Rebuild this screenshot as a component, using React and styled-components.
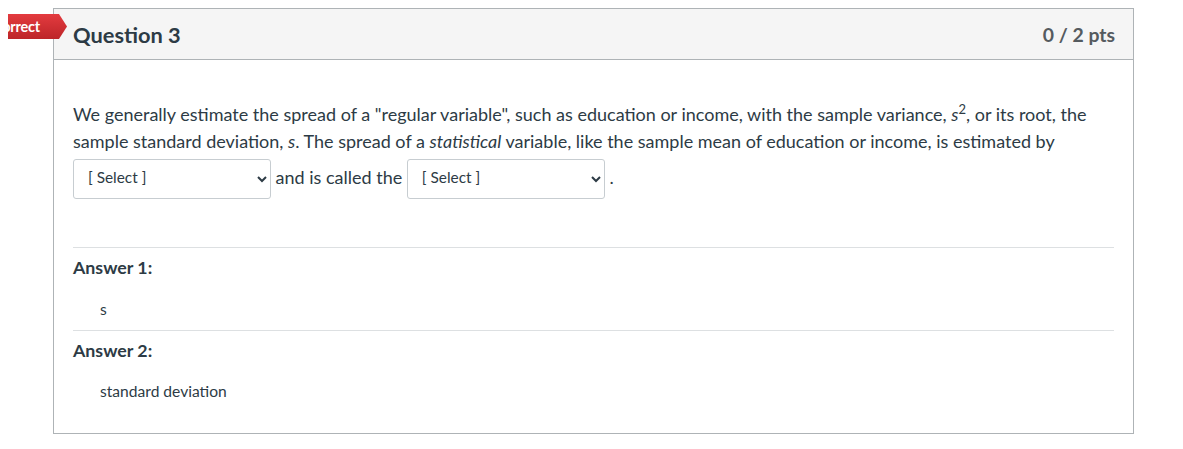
import React from 'react'
import styled, { createGlobalStyle } from 'styled-components'

const GlobalStyle = createGlobalStyle`
  body {
    margin: 8px;
    background: #fff;
    font-family: Lato, "Open Sans", "Liberation Sans", sans-serif;
    color: #2d3b45;
    overflow: hidden;
  }
`

const Page = styled.div`
  position: relative;
  padding-left: 45px;
`

// red "Incorrect" flag hanging over the left edge of the card
const Flag = styled.div`
  position: absolute;
  left: -51px;
  top: 6px;
  height: 25px;
  width: 110px;
  box-sizing: border-box;
  padding-right: 27px;
  display: flex;
  align-items: center;
  justify-content: flex-end;
  color: #fff;
  font-weight: 700;
  font-size: 14.5px;
  letter-spacing: -0.2px;
  background: linear-gradient(#e33b3f, #bd2529);
  clip-path: polygon(0 0, 102px 0, 110px 50%, 102px 100%, 0 100%);
  z-index: 2;
`

const Card = styled.div`
  width: 1081px;
  box-sizing: border-box;
  border: 1px solid #aeb3b6;
`

const Header = styled.div`
  height: 51px;
  box-sizing: border-box;
  background: #f5f5f5;
  border-bottom: 1px solid #aeb3b6;
  display: flex;
  align-items: center;
  justify-content: space-between;
  padding: 1px 18px 0 19px;
`

const Title = styled.div`
  font-size: 21.8px;
  font-weight: 700;
  color: #2d3b45;
`

const Points = styled.div`
  font-size: 19.4px;
  font-weight: 700;
  color: #555b5f;
`

const Body = styled.div`
  padding: 41px 19px 21px 19px;
`

const Text = styled.div`
  font-size: 18px;
  line-height: 27px;
  margin-bottom: 44px;

  sup {
    font-size: 13px;
    line-height: 0;
  }
`

const Select = styled.select`
  width: 198px;
  height: 40px;
  margin: 4px 0;
  vertical-align: middle;
  font-family: Lato, "Open Sans", "Liberation Sans", sans-serif;
  font-size: 15.4px;
  color: #2d3b45;
  background: #fff;
  border: 1px solid #c7cdd1;
  border-radius: 3px;
  padding: 0 8px 4px 10px;
`

const Answer = styled.div`
  border-top: 1px solid #dde0e2;
  padding: 7px 0 11px;
`

const Label = styled.div`
  font-size: 17.8px;
  font-weight: 700;
  line-height: 24px;
`

const Value = styled.div`
  font-size: 15.6px;
  line-height: 20px;
  padding-left: 27px;
  margin-top: ${p => p.gap}px;
`

export default function App() {
  return (
    <>
      <GlobalStyle />
      <Page>
        <Flag>Incorrect</Flag>
        <Card>
          <Header>
            <Title>Question 3</Title>
            <Points>0 / 2 pts</Points>
          </Header>
          <Body>
            <Text>
              We generally estimate the spread of a "regular variable", such as education or income, with the sample variance, <i>s</i><sup>2</sup>, or its root, the sample standard deviation, <i>s</i>. The spread of a <i>statistical</i> variable, like the sample mean of education or income, is estimated by
              <br />
              <Select defaultValue="">
                <option value="">[ Select ]</option>
              </Select>{' '}
              and is called the{' '}
              <Select defaultValue="">
                <option value="">[ Select ]</option>
              </Select>{' '}
              .
            </Text>
            <Answer>
              <Label>Answer 1:</Label>
              <Value gap={20}>s</Value>
            </Answer>
            <Answer>
              <Label>Answer 2:</Label>
              <Value gap={19}>standard deviation</Value>
            </Answer>
          </Body>
        </Card>
      </Page>
    </>
  )
}
